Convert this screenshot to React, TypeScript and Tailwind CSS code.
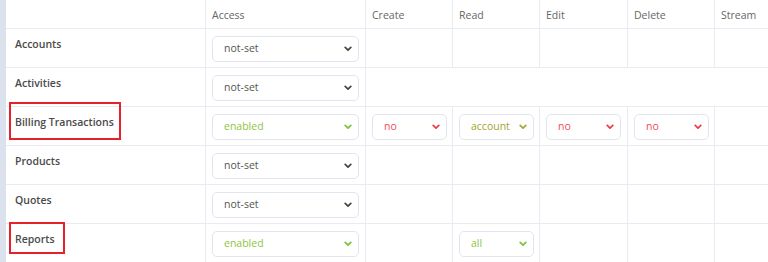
import React from "react";

type Tone = "gray" | "green" | "red" | "olive";

const toneText: Record<Tone, string> = {
  gray: "text-[#555555]",
  green: "text-[#8cc63e]",
  red: "text-[#ef4b57]",
  olive: "text-[#a5a530]",
};
const toneStroke: Record<Tone, string> = {
  gray: "#444444",
  green: "#7cc23a",
  red: "#ef3b47",
  olive: "#a5a530",
};

function Chevron({ tone }: { tone: Tone }) {
  return (
    <svg width="8" height="6" viewBox="0 0 8 6" className="shrink-0">
      <path d="M1.2 1.4 L4 4.2 L6.8 1.4" fill="none" stroke={toneStroke[tone]} strokeWidth="1.7" strokeLinecap="round" strokeLinejoin="round" />
    </svg>
  );
}

function Sel({ value, tone, w }: { value: string; tone: Tone; w: string }) {
  return (
    <div className={`${w} h-[26px] mt-[7px] flex items-center justify-between rounded-[5px] border border-[#e2e5f0] bg-white pl-[11px] pr-[6px]`}>
      <span className={`text-[10.5px] ${toneText[tone]}`}>{value}</span>
      <Chevron tone={tone} />
    </div>
  );
}

const cell = "border-b border-[#e9ebf3]";
const cellL = "border-b border-l border-[#e9ebf3]";

function Label({ text }: { text: string }) {
  return (
    <div className={`${cell} h-[39px] pl-[9px] pt-[7px] text-[10.5px] leading-[16px] font-semibold text-[#4a4a4a]`}>{text}</div>
  );
}

function AccessCell({ value, tone }: { value: string; tone: Tone }) {
  return (
    <div className={`${cellL} h-[39px] pl-[6px]`}>
      <Sel value={value} tone={tone} w="w-[147px]" />
    </div>
  );
}

function Cell({ children }: { children?: React.ReactNode }) {
  return <div className={`${cellL} h-[39px] pl-[6px]`}>{children}</div>;
}

export default function App() {
  const headers = ["Access", "Create", "Read", "Edit", "Delete", "Stream"];
  return (
    <div
      className="relative w-[768px] h-[262px] overflow-hidden bg-white flex"
      style={{ fontFamily: '"Open Sans", "Noto Sans", sans-serif' }}
    >
      <div className="w-[6px] shrink-0 bg-[#dbe1ed]" />
      <div className="grid grid-cols-[199px_160px_87px_87px_88px_87px_1fr] flex-1 content-start">
        <div className={`${cell} h-[29px]`} />
        {headers.map((h) => (
          <div key={h} className={`${cellL} h-[29px] pl-[6px] pt-[7px] text-[10.5px] leading-[16px] text-[#666666]`}>{h}</div>
        ))}

        <Label text="Accounts" />
        <AccessCell value="not-set" tone="gray" />
        <Cell />
        <Cell />
        <Cell />
        <Cell />
        <Cell />

        <Label text="Activities" />
        <AccessCell value="not-set" tone="gray" />
        <div className={`${cellL} h-[39px] col-span-5`} />

        <Label text="Billing Transactions" />
        <AccessCell value="enabled" tone="green" />
        <Cell><Sel value="no" tone="red" w="w-[75px]" /></Cell>
        <Cell><Sel value="account" tone="olive" w="w-[75px]" /></Cell>
        <Cell><Sel value="no" tone="red" w="w-[75px]" /></Cell>
        <Cell><Sel value="no" tone="red" w="w-[75px]" /></Cell>
        <Cell />

        <Label text="Products" />
        <AccessCell value="not-set" tone="gray" />
        <Cell />
        <Cell />
        <Cell />
        <Cell />
        <Cell />

        <Label text="Quotes" />
        <AccessCell value="not-set" tone="gray" />
        <Cell />
        <Cell />
        <Cell />
        <Cell />
        <Cell />

        <Label text="Reports" />
        <AccessCell value="enabled" tone="green" />
        <Cell />
        <Cell><Sel value="all" tone="green" w="w-[75px]" /></Cell>
        <Cell />
        <Cell />
        <Cell />
      </div>

      <div className="absolute left-[9px] top-[102px] w-[112px] h-[38px] border-2 border-[#e8202a]" />
      <div className="absolute left-[9px] top-[222px] w-[56px] h-[32px] border-2 border-[#e8202a]" />
    </div>
  );
}
